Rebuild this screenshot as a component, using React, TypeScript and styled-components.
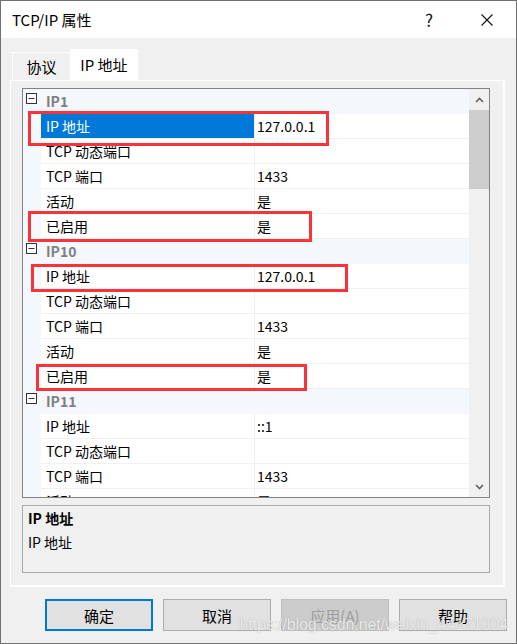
import React from "react";
import styled, { createGlobalStyle, css } from "styled-components";

const GlobalStyle = createGlobalStyle`
  html, body { margin: 0; padding: 0; background: #ffffff; }
  body { font-family: "Noto Sans CJK SC", "Noto Sans", sans-serif; }
  * { box-sizing: border-box; }
`;

const FONT = `"Noto Sans CJK SC", "Noto Sans", sans-serif`;

const Window = styled.div`
  position: relative;
  width: 517px;
  height: 644px;
  border: 1px solid #707070;
  background: #f0f0f0;
  display: flex;
  flex-direction: column;
  font-family: ${FONT};
  color: #000;
  overflow: hidden;
`;

const TitleBar = styled.div`
  height: 37px;
  background: #ffffff;
  display: flex;
  align-items: center;
  padding-left: 11px;
`;

const TitleText = styled.div`
  flex: 1;
  font-size: 15px;
  line-height: 20px;
`;

const CaptionButton = styled.div`
  width: 58px;
  height: 37px;
  display: flex;
  align-items: center;
  justify-content: center;
  font-size: 17px;
  color: #111;
`;

const TabStrip = styled.div`
  display: flex;
  align-items: flex-end;
  height: 31px;
  margin-top: 11px;
  padding-left: 11px;
  position: relative;
  z-index: 2;
`;

const Tab = styled.div<{ $active?: boolean; $width: number }>`
  font-size: 15px;
  display: flex;
  align-items: center;
  justify-content: center;
  width: ${(p) => p.$width}px;
  ${(p) =>
    p.$active
      ? css`
          height: 32px;
          margin-bottom: -1px;
          padding-bottom: 2px;
          background: #ffffff;
        `
      : css`
          height: 28px;
          background: #f0f0f0;
          border-left: 1px solid #ffffff;
          border-top: 1px solid #ffffff;
        `}
`;

const Panel = styled.div`
  margin-left: 9px;
  width: 495px;
  height: 507px;
  border-style: solid;
  border-color: #ffffff;
  border-width: 1px 2px 2px 1px;
  background: #f0f0f0;
  padding: 7px 0 0 11px;
  display: flex;
  flex-direction: column;
`;

const Grid = styled.div`
  width: 468px;
  height: 410px;
  border: 1px solid #828282;
  background: #ffffff;
  display: flex;
  overflow: hidden;
`;

const Rows = styled.div`
  width: 446px;
  height: 408px;
  overflow: hidden;
  display: flex;
  flex-direction: column;
`;

const CategoryRow = styled.div`
  height: 25px;
  flex: none;
  display: flex;
  background: #f4f7fc;
`;

const Expander = styled.div`
  width: 18px;
  display: flex;
  justify-content: center;
  padding-top: 4px;
  padding-right: 2px;
`;

const CategoryName = styled.div`
  padding-left: 5px;
  font-size: 14px;
  font-weight: bold;
  color: #808080;
  line-height: 25px;
`;

const ItemRow = styled.div`
  height: 25px;
  flex: none;
  display: grid;
  grid-template-columns: 18px 214px 214px;
`;

const Margin = styled.div`
  background: #f4f7fc;
`;

const Cell = styled.div<{ $selected?: boolean; $label?: boolean }>`
  font-size: 14px;
  line-height: 24px;
  border-bottom: 1px solid #f0f0f0;
  white-space: nowrap;
  overflow: hidden;
  padding-left: ${(p) => (p.$label ? "5px" : "2px")};
  border-right: ${(p) => (p.$label ? "1px solid #f0f0f0" : "none")};
  background: ${(p) => (p.$selected ? "#0078d7" : "#ffffff")};
  color: ${(p) => (p.$selected ? "#ffffff" : "#000000")};
`;

const ScrollBar = styled.div`
  width: 20px;
  height: 408px;
  background: #f0f0f0;
  display: flex;
  flex-direction: column;
`;

const ArrowButton = styled.div`
  height: 21px;
  display: flex;
  align-items: center;
  justify-content: center;
`;

const Track = styled.div`
  flex: 1;
  display: flex;
  flex-direction: column;
`;

const Thumb = styled.div`
  height: 79px;
  background: #cdcdcd;
`;

const Description = styled.div`
  margin-top: 7px;
  width: 468px;
  height: 68px;
  border: 1px solid #a9a9a9;
  background: #f0f0f0;
  padding: 0 0 0 5px;
  font-size: 14px;
  line-height: 24px;
`;

const DescTitle = styled.div`
  font-weight: bold;
`;

const ButtonRow = styled.div`
  margin-top: 12px;
  display: flex;
  justify-content: flex-end;
  gap: 10px;
  padding-right: 9px;
`;

const Button = styled.div<{ $default?: boolean; $disabled?: boolean }>`
  width: 108px;
  height: 32px;
  display: flex;
  align-items: center;
  justify-content: center;
  font-size: 15px;
  background: ${(p) => (p.$disabled ? "#cccccc" : "#e1e1e1")};
  color: ${(p) => (p.$disabled ? "#9d9d9d" : "#000000")};
  border: ${(p) =>
    p.$default ? "2px solid #0078d7" : p.$disabled ? "1px solid #bfbfbf" : "1px solid #adadad"};
`;

const Annotation = styled.div`
  position: absolute;
  border: 3px solid #f7343c;
  pointer-events: none;
  z-index: 5;
`;

const Watermark = styled.div`
  position: absolute;
  right: 8px;
  bottom: 9px;
  font-family: "Liberation Sans", Arial, sans-serif;
  font-size: 16px;
  letter-spacing: -0.1px;
  color: rgba(255, 255, 255, 0.82);
  text-shadow: 0 0 1px rgba(90, 90, 90, 0.55);
  z-index: 6;
  white-space: nowrap;
`;

const ExpanderIcon = () => (
  <svg width="11" height="11" viewBox="0 0 11 11">
    <rect x="0.5" y="0.5" width="10" height="10" fill="#ffffff" stroke="#333333" />
    <line x1="2.5" y1="5.5" x2="8.5" y2="5.5" stroke="#333333" />
  </svg>
);

const Chevron = ({ up }: { up?: boolean }) => (
  <svg width="9" height="6" viewBox="0 0 9 6">
    <polyline
      points={up ? "1,5 4.5,1.5 8,5" : "1,1 4.5,4.5 8,1"}
      fill="none"
      stroke="#606060"
      strokeWidth="1.6"
    />
  </svg>
);

const CloseIcon = () => (
  <svg width="12" height="12" viewBox="0 0 12 12">
    <path d="M0.5 0.5 L11.5 11.5 M11.5 0.5 L0.5 11.5" stroke="#111" strokeWidth="1.1" />
  </svg>
);

type Item = { label: string; value: string; selected?: boolean };
type Group = { name: string; items: Item[] };

const groups: Group[] = [
  {
    name: "IP1",
    items: [
      { label: "IP 地址", value: "127.0.0.1", selected: true },
      { label: "TCP 动态端口", value: "" },
      { label: "TCP 端口", value: "1433" },
      { label: "活动", value: "是" },
      { label: "已启用", value: "是" },
    ],
  },
  {
    name: "IP10",
    items: [
      { label: "IP 地址", value: "127.0.0.1" },
      { label: "TCP 动态端口", value: "" },
      { label: "TCP 端口", value: "1433" },
      { label: "活动", value: "是" },
      { label: "已启用", value: "是" },
    ],
  },
  {
    name: "IP11",
    items: [
      { label: "IP 地址", value: "::1" },
      { label: "TCP 动态端口", value: "" },
      { label: "TCP 端口", value: "1433" },
      { label: "活动", value: "是" },
      { label: "已启用", value: "是" },
    ],
  },
];

const annotations = [
  { left: 27, top: 110, width: 301, height: 35 },
  { left: 27, top: 210, width: 284, height: 31 },
  { left: 30, top: 263, width: 317, height: 28 },
  { left: 35, top: 363, width: 271, height: 27 },
];

export default function App() {
  return (
    <>
      <GlobalStyle />
      <Window>
        <TitleBar>
          <TitleText>TCP/IP 属性</TitleText>
          <CaptionButton>?</CaptionButton>
          <CaptionButton>
            <CloseIcon />
          </CaptionButton>
        </TitleBar>
        <TabStrip>
          <Tab $width={58}>协议</Tab>
          <Tab $width={68} $active>
            IP 地址
          </Tab>
        </TabStrip>
        <Panel>
          <Grid>
            <Rows>
              {groups.map((g) => (
                <React.Fragment key={g.name}>
                  <CategoryRow>
                    <Expander>
                      <ExpanderIcon />
                    </Expander>
                    <CategoryName>{g.name}</CategoryName>
                  </CategoryRow>
                  {g.items.map((it, i) => (
                    <ItemRow key={g.name + i}>
                      <Margin />
                      <Cell $label $selected={it.selected}>
                        {it.label}
                      </Cell>
                      <Cell>{it.value}</Cell>
                    </ItemRow>
                  ))}
                </React.Fragment>
              ))}
            </Rows>
            <ScrollBar>
              <ArrowButton>
                <Chevron up />
              </ArrowButton>
              <Track>
                <Thumb />
              </Track>
              <ArrowButton>
                <Chevron />
              </ArrowButton>
            </ScrollBar>
          </Grid>
          <Description>
            <DescTitle>IP 地址</DescTitle>
            <div>IP 地址</div>
          </Description>
        </Panel>
        <ButtonRow>
          <Button $default>确定</Button>
          <Button>取消</Button>
          <Button $disabled>应用(A)</Button>
          <Button>帮助</Button>
        </ButtonRow>
        {annotations.map((a, i) => (
          <Annotation
            key={i}
            style={{ left: a.left, top: a.top, width: a.width, height: a.height }}
          />
        ))}
        <Watermark>https://blog.csdn.net/weixin_44171004</Watermark>
      </Window>
    </>
  );
}
